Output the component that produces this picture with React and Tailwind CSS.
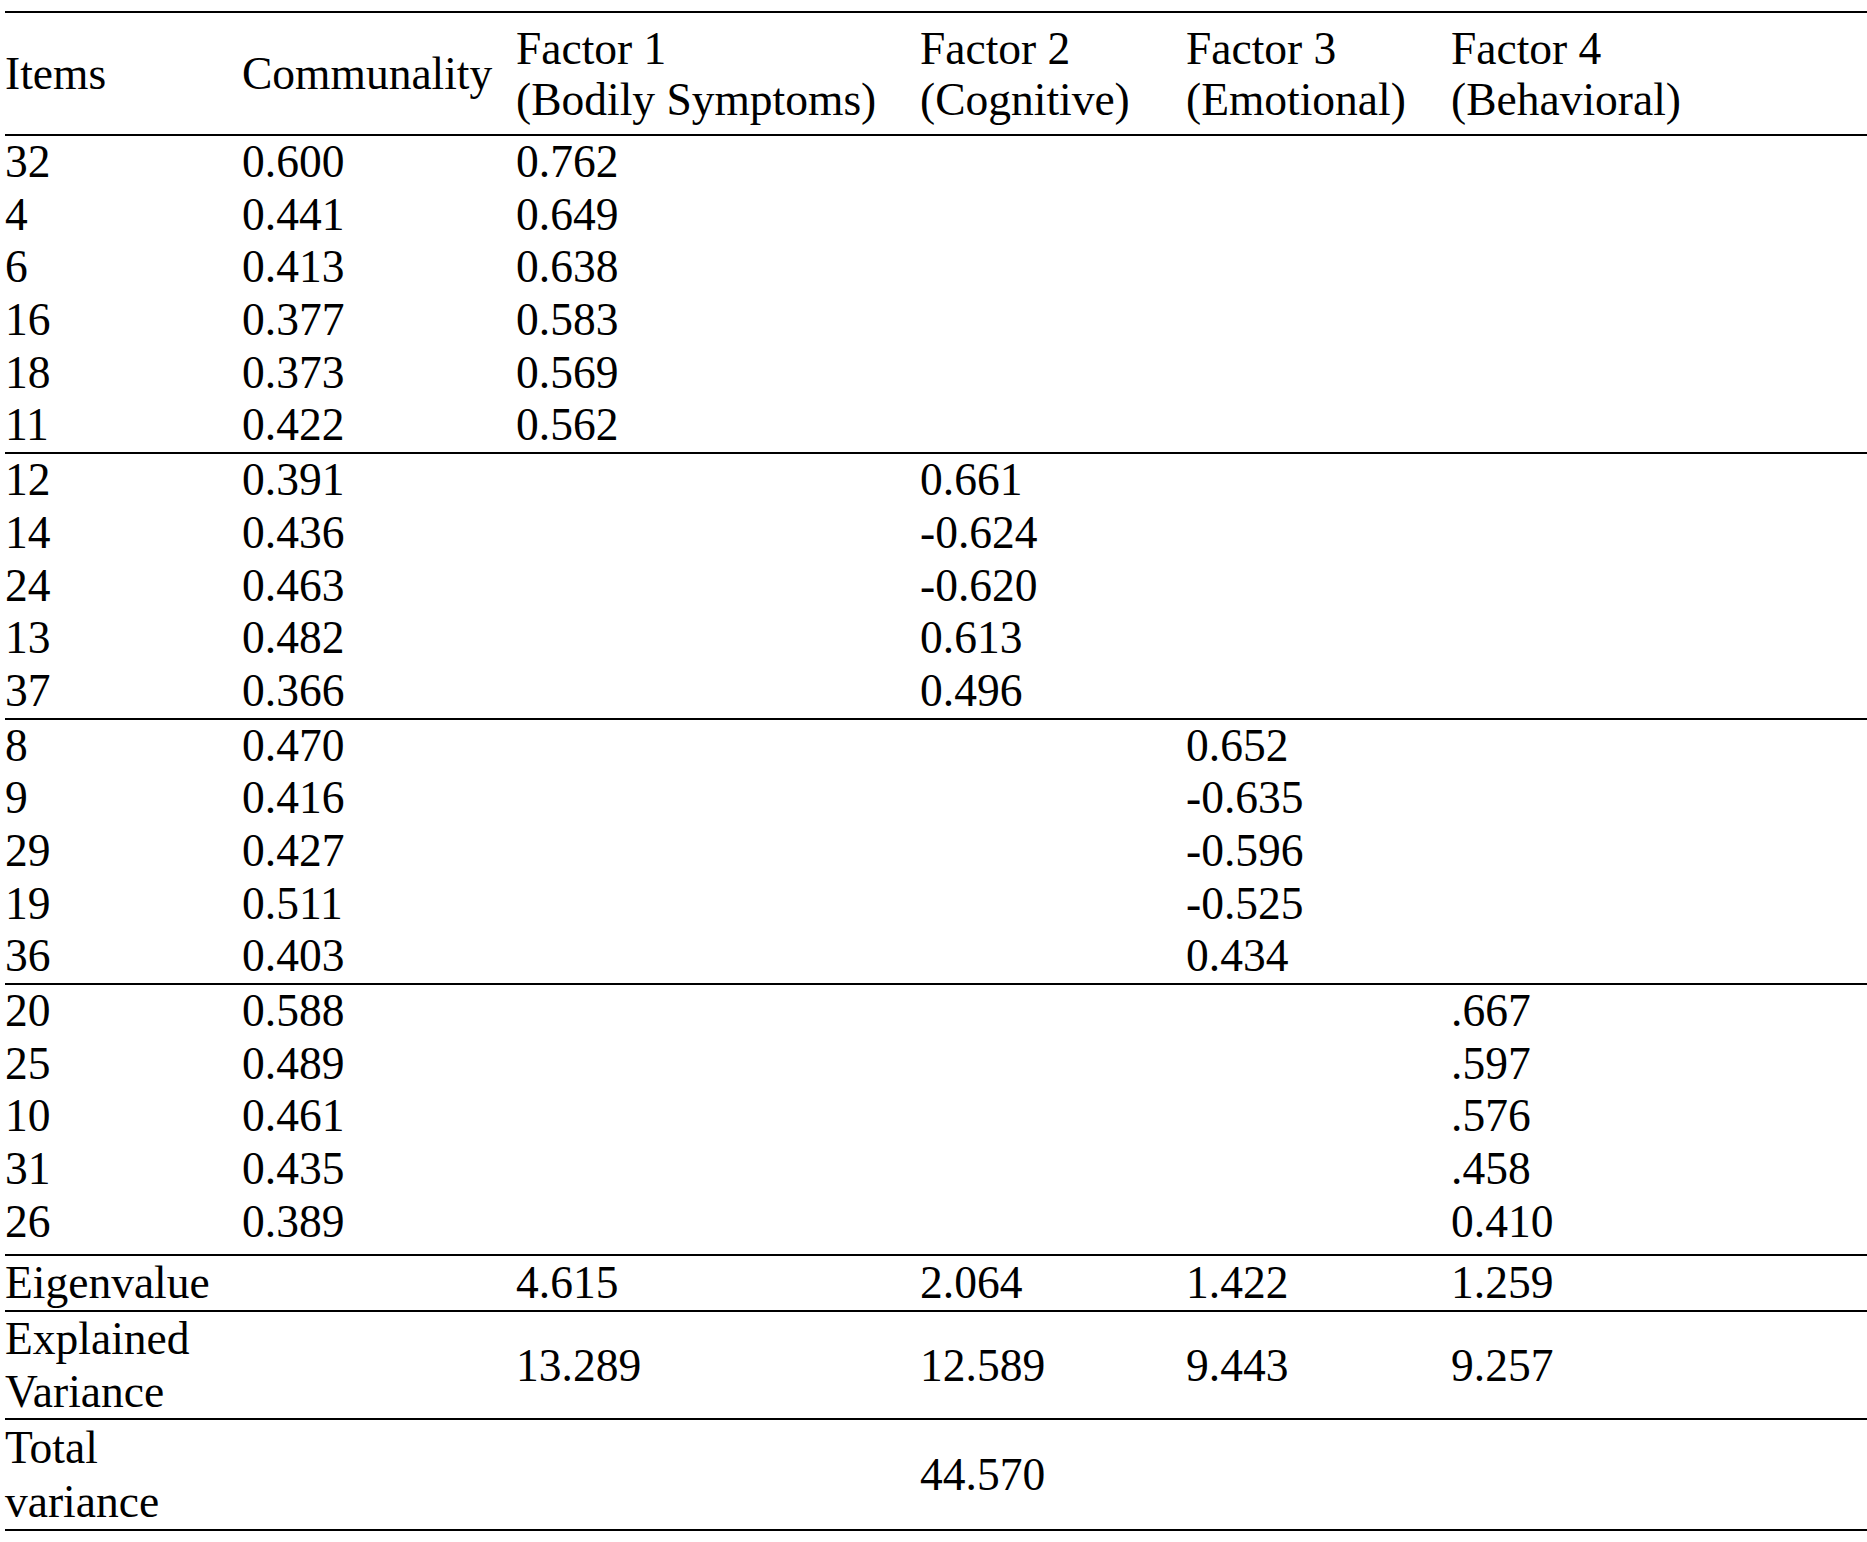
const groups = [
  [
    ['32', '0.600', '0.762', '', '', ''],
    ['4', '0.441', '0.649', '', '', ''],
    ['6', '0.413', '0.638', '', '', ''],
    ['16', '0.377', '0.583', '', '', ''],
    ['18', '0.373', '0.569', '', '', ''],
    ['11', '0.422', '0.562', '', '', ''],
  ],
  [
    ['12', '0.391', '', '0.661', '', ''],
    ['14', '0.436', '', '-0.624', '', ''],
    ['24', '0.463', '', '-0.620', '', ''],
    ['13', '0.482', '', '0.613', '', ''],
    ['37', '0.366', '', '0.496', '', ''],
  ],
  [
    ['8', '0.470', '', '', '0.652', ''],
    ['9', '0.416', '', '', '-0.635', ''],
    ['29', '0.427', '', '', '-0.596', ''],
    ['19', '0.511', '', '', '-0.525', ''],
    ['36', '0.403', '', '', '0.434', ''],
  ],
  [
    ['20', '0.588', '', '', '', '.667'],
    ['25', '0.489', '', '', '', '.597'],
    ['10', '0.461', '', '', '', '.576'],
    ['31', '0.435', '', '', '', '.458'],
    ['26', '0.389', '', '', '', '0.410'],
  ],
]

const cols = 'grid grid-cols-[237px_274px_404px_266px_265px_1fr]'

function Row({ cells }) {
  return (
    <div className={`${cols} h-[52.7px] items-center leading-[52.7px]`}>
      {cells.map((c, i) => (
        <div key={i} className="whitespace-nowrap">{c}</div>
      ))}
    </div>
  )
}

export default function App() {
  return (
    <div className="min-h-screen bg-white pl-[5px] pt-[11px] font-['Liberation_Serif','Times_New_Roman',serif] text-[45.5px] text-black">
      <div className="border-t-2 border-black">
        <div className={`${cols} h-[121px] items-center leading-[51px]`}>
          <div>Items</div>
          <div>Communality</div>
          <div className="whitespace-nowrap">Factor 1<br />(Bodily Symptoms)</div>
          <div className="whitespace-nowrap">Factor 2<br />(Cognitive)</div>
          <div className="whitespace-nowrap">Factor 3<br />(Emotional)</div>
          <div className="whitespace-nowrap">Factor 4<br />(Behavioral)</div>
        </div>
      </div>

      {groups.map((g, gi) => (
        <div key={gi} className={`border-t-2 border-black ${gi === 3 ? 'pb-[6px]' : ''}`}>
          {g.map((r, ri) => (
            <Row key={ri} cells={r} />
          ))}
        </div>
      ))}

      <div className="border-t-2 border-black">
        <div className={`${cols} h-[54px] items-center leading-[52px]`}>
          <div className="whitespace-nowrap">Eigenvalue</div>
          <div></div>
          <div>4.615</div>
          <div>2.064</div>
          <div>1.422</div>
          <div>1.259</div>
        </div>
      </div>

      <div className="border-t-2 border-black">
        <div className={`${cols} h-[106px] items-center leading-[53px]`}>
          <div>Explained<br />Variance</div>
          <div></div>
          <div>13.289</div>
          <div>12.589</div>
          <div>9.443</div>
          <div>9.257</div>
        </div>
      </div>

      <div className="border-t-2 border-b-2 border-black">
        <div className={`${cols} h-[109px] items-center leading-[54px]`}>
          <div>Total<br />variance</div>
          <div></div>
          <div></div>
          <div>44.570</div>
          <div></div>
          <div></div>
        </div>
      </div>
    </div>
  )
}
